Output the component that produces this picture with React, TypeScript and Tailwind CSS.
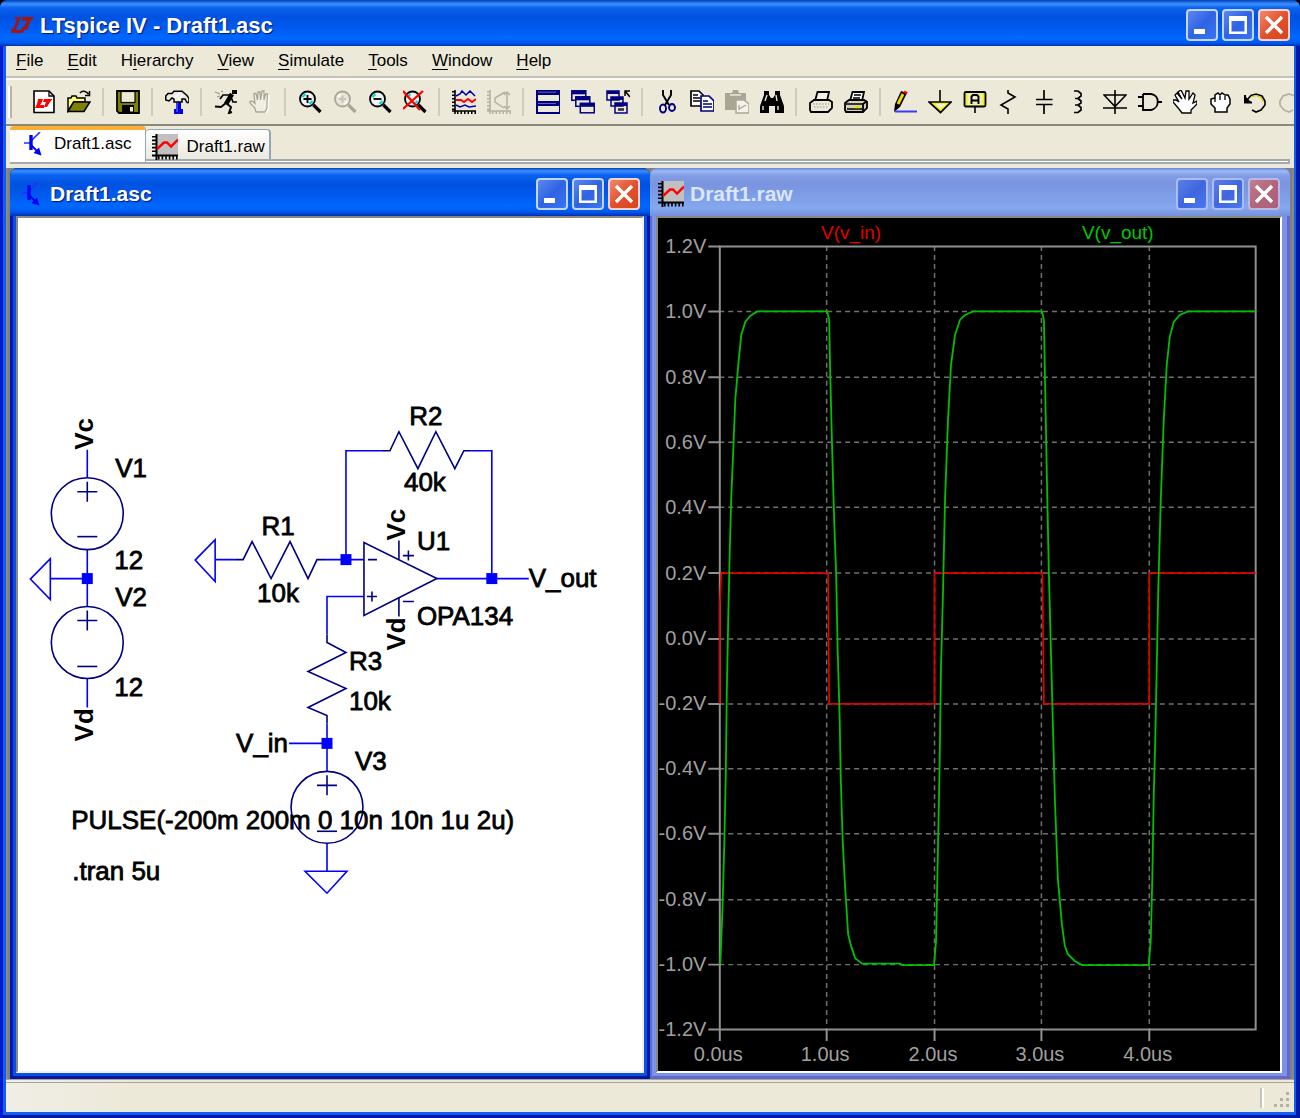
import React from "react";

/* ---------- small shared pieces ---------- */

const NAVY = "#000080";
const WIRE = "#0000ff";

function Icon({ children, label }: { children: React.ReactNode; label?: string }) {
  return (
    <svg viewBox="0 0 24 24" className="size-6 shrink-0" fill="none" role={label ? "img" : undefined} aria-label={label}>
      {children}
    </svg>
  );
}

function LogoMark({ fill }: { fill: string }) {
  return (
    <Icon>
      <path d="M11 4H5L5 6H7L3 16H1V20H13L15 14H12L11 17H6Z" fill={fill} />
      <path d="M12 4H23V7H21L17 17H13V15L17 8H12Z" fill={fill} />
    </Icon>
  );
}

function TransistorIcon() {
  return (
    <Icon>
      <path d="M2 11H9M9 9L18 0" stroke="#2030ff" strokeWidth="1.600" />
      <path d="M9 3V18" stroke="#0000ff" strokeWidth="3.400" />
      <path d="M9 13L15 19" stroke="#0000ff" strokeWidth="1.800" />
      <path d="M19.500 23.500L11.500 21L17 15.500Z" fill="#0000ff" />
    </Icon>
  );
}

function PlotIcon() {
  return (
    <svg viewBox="0 0 26 26" className="size-[26px] shrink-0" fill="none" aria-hidden="true">
      <rect x="4" y="0" width="22" height="22" fill="#c0c0c0" />
      <path d="M4.500 0V26M0 21.500H26" stroke="#000" strokeWidth="2" />
      <path d="M2 2V20" stroke="#000" strokeWidth="4" strokeDasharray="1.600 2" />
      <path d="M6 23.500H26" stroke="#000" strokeWidth="4" strokeDasharray="1.600 2" />
      <path d="M5 15L12 8.500H15L19 12.500L26 5.500" stroke="#f00" strokeWidth="2.400" />
    </svg>
  );
}

/* ---------- toolbar drawings ---------- */

const HAND =
  "M7 22L6 18L1 13V11.500L3 11L6 13.500L5 5V3.500H7L8.500 10L9 2H11L11.500 10L13 1H15V10L16.500 4H18.500L18 13V18L16 22Z";

function Lens({ dim, inner }: { dim?: boolean; inner?: React.ReactNode }) {
  const c = dim ? "#aaa694" : "#000";
  return (
    <>
      <circle cx="9.500" cy="9" r="7.500" fill={dim ? "#e8e5d8" : "#eef4f0"} stroke={c} strokeWidth="1.800" />
      <path d="M4.500 7L7.500 4M11.500 14L14.500 11" stroke={dim ? "#fff" : "#00d8e0"} strokeWidth="2.200" />
      <path d="M15.500 15L22.500 22" stroke={c} strokeWidth="3.200" />
      {inner}
    </>
  );
}

function MiniWindow({ x, y }: { x: number; y: number }) {
  return (
    <>
      <rect x={x} y={y} width="14" height="9.500" fill="#ece9d8" stroke={NAVY} strokeWidth="1.500" />
      <rect x={x} y={y} width="14" height="3.500" fill={NAVY} />
    </>
  );
}

function Printer({ ink }: { ink?: boolean }) {
  return (
    <>
      <path d="M6 11L8.500 2H20L18 11" fill={ink ? "#fff" : "#f2f0e8"} stroke="#000" strokeWidth="1.800" />
      <path d="M1 13L5 10H20L23 12V18L19 22H2L1 20Z" fill={ink ? "#d4d0c0" : "#ece9d8"} stroke="#000" strokeWidth="1.800" />
      {ink ? (
        <>
          <path d="M10 5H17M9 8H16M2 14H19M3 19H18" stroke="#000" strokeWidth="1.500" />
          <path d="M11 17H16" stroke="#e8e000" strokeWidth="2.400" />
          <path d="M19 22V14L23 11" stroke="#000" strokeWidth="1.800" />
        </>
      ) : (
        <path d="M4 14H20M5 17H19" stroke="#b5b2a6" strokeWidth="1.500" strokeDasharray="1.500 1.500" />
      )}
    </>
  );
}

type Tool = { name: string; art: React.ReactNode; disabled?: boolean; sep?: boolean };

const tools: Tool[] = [
  {
    name: "New Schematic",
    art: (
      <>
        <path d="M2 1H17L22 6V22.500H2Z" fill="#fff" stroke="#000" strokeWidth="1.600" />
        <path d="M17 1V6H22" stroke="#000" strokeWidth="1.300" />
        <path d="M11 9H6L5 14L3 18H12V15H8L10 12Z" fill="#f00" />
        <path d="M12 9H20.500L18 12L15 17H12L14 12H11Z" fill="#f00" />
      </>
    ),
  },
  {
    name: "Open",
    art: (
      <>
        <path d="M1 21V8H4L5 6H9L10 8H18V12H7Z" fill="#ffff80" stroke="#000" strokeWidth="1.500" />
        <path d="M1 21.500L6.500 12H23L17 21.500Z" fill="#808000" stroke="#000" strokeWidth="1.500" />
        <path d="M13 3C15 0.500 19 0.500 21.500 4M22.500 1V5.500H18" stroke="#000" strokeWidth="1.500" />
      </>
    ),
  },
  {
    name: "Save",
    sep: true,
    art: (
      <>
        <path d="M1 1H23V23H3L1 21Z" fill="#808000" stroke="#000" strokeWidth="1.800" />
        <rect x="5" y="1.500" width="14" height="11" fill="#ece9d8" stroke="#000" strokeWidth="1.200" />
        <path d="M6 15H18V23H6Z" fill="#000" />
        <rect x="14" y="17" width="3" height="4.500" fill="#ece9d8" />
      </>
    ),
  },
  {
    name: "Control Panel",
    sep: true,
    art: (
      <>
        <path d="M11 11H16V19H18V24H9V19H11Z" fill="#0000e0" />
        <path d="M12 12V22" stroke="#7080ff" strokeWidth="1" />
        <path
          d="M0.800 6L3 3.500H7L9 1.200H17L22 5.500L24 8.500V12.500H22L20 9H17V12H9V9L7 8L4 11L0.800 10Z"
          fill="#eceae2"
          stroke="#000"
          strokeWidth="1.500"
        />
        <path d="M9 8L15 3M13 9L18 5" stroke="#fff" strokeWidth="1.600" />
      </>
    ),
  },
  {
    name: "Run",
    sep: true,
    art: (
      <>
        <path d="M18 0H23V4H18Z" fill="#000" />
        <path d="M18 4L12 14" stroke="#000" strokeWidth="4.500" />
        <path d="M18 5H9L6 9M17 7L19 12H23" stroke="#000" strokeWidth="1.700" />
        <path d="M12 13L7 17L1 16.500M12 13L17 17L15 23L18 22" stroke="#000" strokeWidth="2" />
        <path d="M1 2L6 4M3 7L6 6M7 1L9 2" stroke="#99968a" strokeWidth="1.200" />
      </>
    ),
  },
  {
    name: "Halt",
    disabled: true,
    art: (
      <>
        <path d={HAND} transform="translate(2 1)" fill="#fff" />
        <path d={HAND} fill="#f1efe4" stroke="#aaa694" strokeWidth="1.300" />
      </>
    ),
  },
  { name: "Zoom to rectangle", sep: true, art: <Lens inner={<path d="M5.500 9H13.500M9.500 5V13" stroke="#000" strokeWidth="1.800" />} /> },
  { name: "Pan", disabled: true, art: <Lens dim inner={<path d="M6 9H13M9.500 5.500V12.500" stroke="#c8c4b4" strokeWidth="2" />} /> },
  { name: "Zoom back", art: <Lens inner={<path d="M5.500 9H13.500" stroke="#000" strokeWidth="1.800" />} /> },
  {
    name: "Zoom full extents",
    art: <Lens inner={<path d="M0 1L17 20M20 1L0 19" stroke="#f00" strokeWidth="2.200" />} />,
  },
  {
    name: "Autorange",
    sep: true,
    art: (
      <>
        <path d="M3 0V24M0 21H24" stroke="#000" strokeWidth="1.600" />
        <path d="M1.500 1V20M5 22.500H24" stroke="#000" strokeWidth="3" strokeDasharray="1.500 2" />
        <path d="M4 6L8 4L10 1L14 5L18 1L23 6M4 15L8 17L13 15L17 17L24 16" stroke="#0000b0" strokeWidth="1.500" />
        <path d="M4 10H9L12 12L16 9L20 12L24 9" stroke="#f00" strokeWidth="2" />
      </>
    ),
  },
  {
    name: "Plot settings",
    disabled: true,
    art: (
      <>
        <path d="M3 0V24M0 21H24" stroke="#b5b1a0" strokeWidth="1.600" />
        <path d="M1.500 1V20M5 22.500H24" stroke="#b5b1a0" strokeWidth="3" strokeDasharray="1.500 2" />
        <path d="M18 2L8 8V12L17 18M20 3V19M17 5L20 2L23 5M17 16L20 19L23 16" stroke="#b5b1a0" strokeWidth="1.500" />
      </>
    ),
  },
  {
    name: "Tile windows",
    sep: true,
    art: (
      <>
        <path d="M0 0H25V24H0Z" fill={NAVY} />
        <path d="M2 5H23V11H2ZM2 16H23V22H2Z" fill="#ece9d8" />
        <path d="M2 2.200H20M2 13.500H20" stroke="#7080c0" strokeWidth="0.800" />
      </>
    ),
  },
  {
    name: "Cascade windows",
    art: (
      <>
        <MiniWindow x={0.8} y={0.8} />
        <MiniWindow x={4.8} y={6.8} />
        <MiniWindow x={9.3} y={13.3} />
      </>
    ),
  },
  {
    name: "Close all windows",
    art: (
      <>
        <path d="M1 1H13V10H1ZM5 7H17V16H5ZM9 13H21V23H9Z" fill="#ece9d8" stroke={NAVY} strokeWidth="1.500" />
        <path d="M1 1H13V4H1ZM5 7H17V10H5ZM9 13H21V16H9Z" fill={NAVY} />
        <path d="M12 19.500H18" stroke="#333" strokeWidth="2.600" />
        <path d="M19 6V1H24M19 1L24 7" stroke="#000" strokeWidth="1.500" />
      </>
    ),
  },
  {
    name: "Cut",
    sep: true,
    art: (
      <>
        <path d="M8 0V5L14 15M16 0V5L10 15" stroke="#000" strokeWidth="1.900" />
        <ellipse cx="8" cy="18.500" rx="3" ry="4" stroke={NAVY} strokeWidth="1.900" />
        <ellipse cx="17" cy="17.500" rx="3" ry="3.500" stroke={NAVY} strokeWidth="1.900" />
      </>
    ),
  },
  {
    name: "Copy",
    art: (
      <>
        <path d="M1 1H9L13 5V16H1Z" fill="#fff" stroke="#000" strokeWidth="1.700" />
        <path d="M3 5H8M3 8H10M3 11H10" stroke="#000" strokeWidth="1.300" />
        <path d="M11 6H19L24 11V21H11Z" fill="#fff" stroke={NAVY} strokeWidth="1.700" />
        <path d="M13 11H18M13 14H22M13 17H22" stroke={NAVY} strokeWidth="1.300" />
      </>
    ),
  },
  {
    name: "Paste",
    disabled: true,
    art: (
      <>
        <path d="M0 3H7L8 0H13L14 3H21V20H0Z" fill="#aaa694" />
        <path d="M5 5H16" stroke="#ece9d8" strokeWidth="1.500" />
        <path d="M11 10H19L24 14V23H11Z" fill="#f4f2ea" stroke="#aaa694" strokeWidth="1.500" />
        <path d="M14 19L21 15M14 15V20" stroke="#aaa694" strokeWidth="1.300" />
      </>
    ),
  },
  {
    name: "Find",
    art: (
      <>
        <path d="M4 5V1H9V5L11 8H13L15 5V1H20V5L24 16V23H15V16H9V23H0V16Z" fill="#000" />
        <path d="M7 5L5 11M16 5L17 11M3 16V20M18 16V20" stroke="#ece9d8" strokeWidth="1.400" />
      </>
    ),
  },
  { name: "Print setup", sep: true, art: <Printer /> },
  { name: "Print", art: <Printer ink /> },
  {
    name: "Draw wire",
    sep: true,
    art: (
      <>
        <path d="M2 14L8 1L14 3L7 17L1 22Z" fill="#000" />
        <path d="M5 14L10 4" stroke="#f0d800" strokeWidth="3" />
        <path d="M11 1.500L14 3.500" stroke="#f00" strokeWidth="2.600" />
        <path d="M2 21.500H24" stroke="#3838ff" strokeWidth="2" />
      </>
    ),
  },
  {
    name: "Ground",
    art: (
      <>
        <path d="M12 0V12" stroke="#000" strokeWidth="1.600" />
        <path d="M3 12.500H22L12.500 22Z" fill="#f4f000" />
        <path d="M7 14H18L12.500 19Z" fill="#f2f0d8" />
        <path d="M1 12H23L12.500 22.500Z" stroke="#000" strokeWidth="1.700" />
      </>
    ),
  },
  {
    name: "Label net",
    art: (
      <>
        <rect x="1.500" y="2" width="21" height="14.500" rx="1.500" fill="#f4f000" stroke="#000" strokeWidth="1.800" />
        <rect x="4.500" y="3.500" width="15" height="11.500" fill="#efeccb" />
        <path d="M8.500 14V6.500L10 5H14L15.500 6.500V14M8.500 10.500H15.500" stroke="#000" strokeWidth="1.900" />
        <path d="M12 17V23" stroke="#000" strokeWidth="1.600" />
      </>
    ),
  },
  { name: "Resistor", art: <path d="M10 0V3L17 7L3 15L10 19V24" stroke="#000" strokeWidth="1.600" /> },
  { name: "Capacitor", art: <path d="M11 0V9.500M3 9.500H19.500M3 14.500H19.500M11 14.500V24" stroke="#000" strokeWidth="1.700" /> },
  {
    name: "Inductor",
    art: <path d="M6 1H10L13 3.500V6L10 8.500H7M10 8.500L13 11V13L10 15H7M10 15L13 17.500V20L10 22.500H6" stroke="#000" strokeWidth="1.700" />,
  },
  {
    name: "Diode",
    art: <path d="M12 0V24M1 5H23L12 16.500ZM0 18H24" stroke="#000" strokeWidth="1.600" />,
  },
  {
    name: "Component",
    art: <path d="M5 4H13C22 5 22 18 13 20H5V4M0 7H5M0 16H5M19 12H24" stroke="#000" strokeWidth="1.800" />,
  },
  {
    name: "Move",
    art: (
      <path
        d="M6 19L0 12V10H3L6 12L2 5L4 3L9 9L5 2L8 0L12 8L13 1H16V9L20 3L22 5L20 13L24 11V14L18 20V23H9Z"
        fill="#fff"
        stroke="#000"
        strokeWidth="1.300"
      />
    ),
  },
  {
    name: "Drag",
    art: (
      <>
        <path
          d="M7 22V18L3 14V9L7 8V5L10 3L12 5L14 3L17 5L20 5L22 9V14L19 18V22Z"
          fill="#fff"
          stroke="#000"
          strokeWidth="1.500"
        />
        <path d="M7 8V12M12 6V10M17 6V10" stroke="#000" strokeWidth="1.300" />
      </>
    ),
  },
  {
    name: "Undo",
    art: (
      <>
        <path d="M4 10L8 5.500L13 4L19 6L22 11V15L18 20L13 22L9 20" stroke="#000" strokeWidth="1.600" />
        <path d="M8 7L13 5.500L18 7.500L20.500 12" stroke="#d8d000" strokeWidth="1.300" />
        <path d="M2 5V12.500H9" stroke="#000" strokeWidth="2" />
        <path d="M2 6L8.500 12.500H2Z" fill="#000" />
      </>
    ),
  },
  {
    name: "Redo",
    disabled: true,
    art: <path d="M21 11L17 6L11 4L5 6L2 11V15L6 20L11 22L15 20" stroke="#b5b1a0" strokeWidth="1.700" />,
  },
];

/* ---------- window chrome ---------- */

const capBase = "flex size-8 items-center justify-center rounded border-2 ";
const capBlue = capBase + "border-[#c3d5f8] bg-linear-to-br from-[#5b87ee] via-[#2f63e4] to-[#3a74f2]";
const capRed = capBase + "border-[#f3d3cc] bg-linear-to-br from-[#ee8a6c] via-[#e2502c] to-[#d8431c]";
const capBlueDim = capBase + "border-[#a9bdf2] bg-linear-to-br from-[#5c7fe6] via-[#3f66df] to-[#4a78ee]";
const capRedDim = capBase + "border-[#b9b8e6] bg-linear-to-br from-[#c0808e] via-[#b2667a] to-[#ab5f78]";

function CaptionButtons({ of, dim }: { of: string; dim?: boolean }) {
  const blue = dim ? capBlueDim : capBlue;
  return (
    <div className="flex gap-1">
      <button type="button" aria-label={`Minimize ${of}`} className={blue}>
        <Icon>
          <rect x="4" y="16" width="11" height="5" fill="#fff" />
        </Icon>
      </button>
      <button type="button" aria-label={`Maximize ${of}`} className={blue}>
        <Icon>
          <path d="M3 3H21V21H3ZM5.500 8V18.500H18.500V8Z" fill="#fff" fillRule="evenodd" />
        </Icon>
      </button>
      <button type="button" aria-label={`Close ${of}`} className={dim ? capRedDim : capRed}>
        <Icon>
          <path d="M4 4L20 20M20 4L4 20" stroke="#fff" strokeWidth="3.400" />
        </Icon>
      </button>
    </div>
  );
}

const menus: [string, string, string][] = [
  ["", "F", "ile"],
  ["", "E", "dit"],
  ["H", "i", "erarchy"],
  ["", "V", "iew"],
  ["", "S", "imulate"],
  ["", "T", "ools"],
  ["", "W", "indow"],
  ["", "H", "elp"],
];

/* ---------- schematic ---------- */

function Source({ x, y, minus }: { x: number; y: number; minus: number }) {
  return (
    <g stroke={NAVY} strokeWidth="1.600" fill="none">
      <circle cx={x} cy={y} r="36" />
      <path d={`M${x - 10} ${y - 22}H${x + 10}M${x} ${y - 32}V${y - 12}`} />
      <path d={`M${x - 10} ${minus}H${x + 10}`} />
    </g>
  );
}

const nodes: [number, number][] = [
  [87, 579],
  [346, 560],
  [492, 579],
  [327, 744],
];

const labels: [number, number, string, "start" | "middle" | "end"][] = [
  [115, 477, "V1", "start"],
  [114, 569, "12", "start"],
  [115, 606, "V2", "start"],
  [114, 697, "12", "start"],
  [278, 535, "R1", "middle"],
  [278, 602, "10k", "middle"],
  [426, 425, "R2", "middle"],
  [425, 491, "40k", "middle"],
  [417, 550, "U1", "start"],
  [417, 625, "OPA134", "start"],
  [529, 587, "V_out", "start"],
  [349, 671, "R3", "start"],
  [349, 711, "10k", "start"],
  [288, 753, "V_in", "end"],
  [355, 771, "V3", "start"],
  [71, 830, "PULSE(-200m 200m 0 10n 10n 1u 2u)", "start"],
  [72, 881, ".tran 5u", "start"],
];

const rails: [number, number, string][] = [
  [93, 450, "Vc"],
  [93, 742, "Vd"],
  [405, 541, "Vc"],
  [405, 651, "Vd"],
];

function Schematic() {
  return (
    <svg viewBox="18 218 624 854" className="min-h-0 w-full flex-1" role="img" aria-label="Schematic">
      <g fill="none" stroke={WIRE} strokeWidth="1.600">
        <path d="M87 450V478M87 550V607M87 679V708M50 579H87" />
        <path d="M50 559V600L30 579.500Z" />
        <path d="M215 540V582L195 560.500Z" />
        <path d="M215 560H235M325 560H364M346 560V451H382M472 451H492V579M437 579H529" />
        <path d="M364 597H327V635M327 724V772M289 744H327M327 844V872" />
        <path d="M305 872H347L327 894Z" />
      </g>
      <g fill="none" stroke={NAVY} strokeWidth="1.600">
        <path d="M235 560H243L252 542L271 579L290 542L308 579L317 560H325" />
        <path d="M382 451H390L399 432L418 469L436 432L455 469L464 451H472" />
        <path d="M327 635V643L346 653L308 672L346 689L308 708L327 716V724" />
        <path d="M364 543V616L437 579Z" />
        <path d="M399 541V560M399 598V617M368 560H377M367 597H377M372 592V602M403 556H414M408.500 551V561M403 602H414" />
      </g>
      <Source x={87} y={514} minus={537} />
      <Source x={87} y={643} minus={667} />
      <Source x={327} y={808} minus={832} />
      {nodes.map(([x, y]) => (
        <rect key={`${x}-${y}`} x={x - 5.5} y={y - 5.5} width="11" height="11" fill={WIRE} />
      ))}
      <g className="font-['Liberation_Sans',Arial,sans-serif] text-[26px]" fill="#000" stroke="#000" strokeWidth="0.800">
        {labels.map(([x, y, t, a]) => (
          <text key={`${x}-${y}`} x={x} y={y} textAnchor={a}>
            {t}
          </text>
        ))}
      </g>
      <g className="font-['Liberation_Sans',Arial,sans-serif] text-[26px] font-bold" fill="#000">
        {rails.map(([x, y, t]) => (
          <text key={`${x}-${y}`} transform={`translate(${x} ${y}) rotate(-90)`}>
            {t}
          </text>
        ))}
      </g>
    </svg>
  );
}

/* ---------- waveform viewer ---------- */

const volts = ["1.2V", "1.0V", "0.8V", "0.6V", "0.4V", "0.2V", "0.0V", "-0.2V", "-0.4V", "-0.6V", "-0.8V", "-1.0V", "-1.2V"];
const rowY = [246, 311, 377, 442, 507, 573, 639, 704, 769, 834, 900, 965, 1030];
const times = ["0.0us", "1.0us", "2.0us", "3.0us", "4.0us"];
const colX = [719, 826, 934, 1041, 1149];

const vOut =
  "M720 965L722 915L724 845L725.500 775L726.500 693L728 617L729.500 550L731 497L733 450L735 400L738 365L741 335L745 322L750 316L757 311.500H827L829 320L830 372L832 450L834 520L836 574L837.500 650L839.500 718L840.500 775L842.500 840L844.500 880L848 935L851 947L855 959L862 964.500H900L902 966H934L936 942L938 845L939.500 770L941 667L943 592L945 500L948 420L951 365L955 335L960 320L965 315L973 311.500H1042L1044 320L1045.500 400L1047 480L1049 575L1051 650L1053 725L1055 800L1058 880L1062 925L1065 947L1068 955L1075 962L1082 966H1149L1151 940L1152.500 880L1154 795L1155.500 740L1157 665L1158.500 590L1161 500L1164 420L1167 365L1170 337L1174 322L1180 315L1188 311.500H1256";

const vIn = "M719.500 704V605L721 573.500H828L829 704.500H934.500V573.500H1042.500L1044 704.500H1149.500V573.500H1256";

function Waveforms() {
  return (
    <svg viewBox="658 218 622 854" className="min-h-0 w-full flex-1" role="img" aria-label="Waveform plot">
      <g stroke="#707070" strokeWidth="1.500" strokeDasharray="5 4">
        {rowY.slice(1, -1).map((y) => (
          <path key={y} d={`M719 ${y + 0.5}H1256`} />
        ))}
        {colX.slice(1).map((x) => (
          <path key={x} d={`M${x + 0.5} 246V1030`} />
        ))}
      </g>
      <g stroke="#909090" strokeWidth="2" fill="none">
        <path d="M719.500 246.500H1256V1030.500H719.500Z" />
        <path d={rowY.map((y) => `M708 ${y + 0.5}H720`).join("")} />
        <path d={colX.map((x) => `M${x + 0.5} 1030V1042`).join("")} />
      </g>
      <path d={vIn} stroke="#e00000" strokeWidth="1.700" fill="none" />
      <path d={vOut} stroke="#00c000" strokeWidth="1.800" fill="none" />
      <g className="font-['Liberation_Sans',Arial,sans-serif] text-[20px]" fill="#a0a0a0">
        {volts.map((v, i) => (
          <text key={v} x="706" y={rowY[i] + 7} textAnchor="end">
            {v}
          </text>
        ))}
        {times.map((t, i) => (
          <text key={t} x={colX[i] - 1} y="1062" textAnchor="middle">
            {t}
          </text>
        ))}
      </g>
      <g className="font-['Liberation_Sans',Arial,sans-serif] text-[19px]" textAnchor="middle">
        <text x="851" y="239" fill="#e00000">
          V(v_in)
        </text>
        <text x="1118" y="239" fill="#00c800">
          V(v_out)
        </text>
      </g>
    </svg>
  );
}

/* ---------- application window ---------- */

export default function App() {
  return (
    <div className="h-screen bg-black font-['Liberation_Sans',Arial,sans-serif] text-black">
      <div className="flex h-full flex-col rounded-t-lg bg-[#0f5ff0] px-1.5 pb-1.5 shadow-[inset_3px_0_#0019d0,inset_-4px_0_#001aa8,inset_0_-3px_#0018a4]">
        <header className="-mx-1.5 flex h-[46px] shrink-0 items-center justify-between rounded-t-lg bg-[linear-gradient(to_bottom,#0040b8_0,#3c90ff_4px,#0a62ee_8px,#0052e0_16px,#005af0_28px,#0068ff_38px,#0058ee_43px,#0030b0_46px)] pt-1 pr-2.5 pl-2.5">
          <div className="flex items-center gap-1.5">
            <LogoMark fill="#a01810" />
            <h1 className="text-[22px] font-bold text-white [text-shadow:1px_1px_1px_#00187a]">LTspice IV - Draft1.asc</h1>
          </div>
          <CaptionButtons of="LTspice" />
        </header>

        <div className="flex min-h-0 flex-1 flex-col bg-[#ece9d8]">
          <nav aria-label="Menu" className="flex h-8 shrink-0 items-center gap-6 border-b-2 border-[#c4c2b6] px-2.5 text-[17px] leading-7">
            {menus.map(([a, k, b]) => (
              <button key={a + k + b} type="button" className="whitespace-nowrap">
                {a}
                <span className="underline underline-offset-3">{k}</span>
                {b}
              </button>
            ))}
          </nav>

          <div role="toolbar" aria-label="Toolbar" className="flex h-12 shrink-0 items-center overflow-hidden border-t-2 border-b-2 border-t-[#fbfaf5] border-b-[#8b887c] pl-1">
            <span className="mr-3.5 h-8 w-0.5 shrink-0 bg-[#b8b5a6] shadow-[-2px_0_#fff]" />
            {tools.map((t) => (
              <React.Fragment key={t.name}>
                {t.sep && <span className="mx-1.5 h-7 w-0.5 shrink-0 bg-[#cfccbc]" />}
                <button
                  type="button"
                  aria-label={t.name}
                  disabled={t.disabled}
                  className="flex h-9 w-[35px] shrink-0 items-center justify-center"
                >
                  <Icon>{t.art}</Icon>
                </button>
              </React.Fragment>
            ))}
          </div>

          <div className="shrink-0 px-1 pb-1 text-[17px]">
            <div role="tablist" aria-label="Open documents" className="flex h-[33px] items-end">
              <button
                type="button"
                role="tab"
                aria-selected="true"
                className="relative -mb-[3px] flex h-9 items-center gap-2 rounded-t border-t-4 border-r border-t-[#fbb034] border-r-[#91a7b4] bg-white pr-3.5 pb-1 pl-3"
              >
                <TransistorIcon />
                Draft1.asc
              </button>
              <button
                type="button"
                role="tab"
                aria-selected="false"
                className="flex h-[30px] items-center gap-2 rounded-t border-t border-r-2 border-[#91a7b4] bg-linear-to-b from-white to-[#ece9e0] pt-1 pr-1 pl-1.5"
              >
                <PlotIcon />
                Draft1.raw
              </button>
            </div>
            <div className="h-[5px] border-y-2 border-r-2 border-[#a3abad] bg-white" />
          </div>

          <main className="grid min-h-0 flex-1 grid-cols-2 border-x-2 border-[#8b887c] bg-[#808080] px-0.5">
            <section aria-label="Draft1.asc" className="flex min-h-0 flex-col rounded-t-lg bg-[#0a50e4] px-1.5 pb-1.5 shadow-[inset_3px_0_#0018b0,inset_-3px_0_#0018a0,inset_0_-3px_#0018a0]">
              <header className="-mx-1.5 flex h-12 shrink-0 items-center justify-between rounded-t-lg bg-[linear-gradient(to_bottom,#0040b8_0,#3c90ff_3px,#0a62ee_7px,#0052e0_16px,#005af0_28px,#0068ff_38px,#0058ee_44px,#0030b0_48px)] pt-1 pr-2.5 pl-2.5">
                <div className="flex items-center gap-1.5">
                  <TransistorIcon />
                  <h2 className="text-[21px] font-bold text-white [text-shadow:1px_1px_1px_#00187a]">Draft1.asc</h2>
                </div>
                <CaptionButtons of="Draft1.asc" />
              </header>
              <div className="flex min-h-0 flex-1 flex-col border-2 border-t-[#8b887c] border-r-[#f4f2e8] border-b-[#f4f2e8] border-l-[#8b887c] bg-white">
                <Schematic />
              </div>
            </section>

            <section aria-label="Draft1.raw" className="flex min-h-0 flex-col rounded-t-lg bg-[#7b92e6] pr-2 pb-1.5 pl-1.5 shadow-[inset_2px_0_#5c6ccc,inset_-3px_0_#6468cc,inset_0_-3px_#6468cc]">
              <header className="-mr-2 -ml-1.5 flex h-12 shrink-0 items-center justify-between rounded-t-lg bg-[linear-gradient(to_bottom,#6a86dc_0,#9db9f4_3px,#829ce4_8px,#7a94e0_16px,#7f9fe8_30px,#84a8ee_40px,#7590e0_48px)] pt-1 pr-2.5 pl-2">
                <div className="flex items-center gap-1.5">
                  <PlotIcon />
                  <h2 className="text-[21px] font-bold text-[#dbe5fb]">Draft1.raw</h2>
                </div>
                <CaptionButtons of="Draft1.raw" dim />
              </header>
              <div className="flex min-h-0 flex-1 flex-col border-2 border-t-[#8b887c] border-r-white border-b-white border-l-[#8b887c] bg-black">
                <Waveforms />
              </div>
            </section>
          </main>

          <footer className="flex h-[33px] shrink-0 items-end justify-end gap-3 border-t-4 border-double border-[#a9a698] bg-linear-to-r from-[#f0eee6] via-[#ece9d8] via-10% to-[#ece9d8] pr-1 pb-1">
            <span className="h-5 w-0.5 bg-[#c8c5b4] shadow-[2px_0_#fff]" />
            <svg viewBox="0 0 16 16" className="size-4" aria-hidden="true">
              <path d="M12 0h3v3h-3zM12 6h3v3h-3zM6 6h3v3H6zM12 12h3v3h-3zM6 12h3v3H6zM0 12h3v3H0z" fill="#b5b2a2" />
            </svg>
          </footer>
        </div>
      </div>
    </div>
  );
}
